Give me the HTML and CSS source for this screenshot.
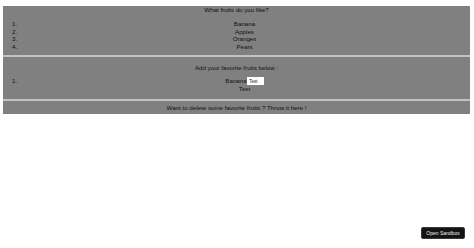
FILE: index.html
```html
<!DOCTYPE html>
<html>
<head>
<meta charset="utf-8">
<link rel="stylesheet" href="styles.css">
</head>
<body>
<div class="stack">
  <section class="box box-fruits">
    <div class="title">What fruits do you like?</div>
    <ol class="list">
      <li>Banana</li>
      <li>Apples</li>
      <li>Oranges</li>
      <li>Pears</li>
    </ol>
  </section>
  <section class="box box-add">
    <p class="title-p">Add your favorite fruits below :</p>
    <ol class="list">
      <li><span>Banana</span><input class="edit" type="text" value="Test"><div>Test</div></li>
    </ol>
  </section>
  <section class="box box-trash">
    Want to delete some favorite fruits ? Throw it here !
  </section>
</div>
<button class="sandbox">Open Sandbox</button>
</body>
</html>
```

FILE: styles.css
```css
html, body {
  background: #ffffff;
}
body {
  margin: 6px 4px 0 3px;
  font-family: "Liberation Sans", Arial, sans-serif;
  font-size: 6.2px;
  line-height: 7.5px;
  color: #111111;
}
.stack {
  display: flex;
  flex-direction: column;
  gap: 2px;
  background: #c2c2c2;
}
.box {
  background: #808080;
  text-align: center;
}
.list {
  margin: 6.8px 0 5px 0;
  padding-left: 16px;
}
.title-p {
  margin: 0;
  padding-top: 6.4px;
}
.box-add .list {
  margin: 6px 0 6.5px 0;
}
.edit {
  width: 17px;
  height: 7.5px;
  box-sizing: border-box;
  border: none;
  padding: 1px 2px 0 2.5px;
  margin: 0;
  background: #ffffff;
  font-family: "Liberation Sans", Arial, sans-serif;
  font-size: 4.6px;
  line-height: 6px;
  color: #222;
  vertical-align: top;
  outline: none;
}
.box-trash {
  padding: 3px 0;
}
.sandbox {
  position: fixed;
  right: 9px;
  bottom: 9px;
  width: 44px;
  height: 12px;
  padding: 0;
  background: #141414;
  color: #f2f2f2;
  border: 1px solid #3a3a3a;
  border-radius: 2px;
  font-family: "Liberation Sans", Arial, sans-serif;
  font-size: 5px;
  line-height: 10px;
}
```
